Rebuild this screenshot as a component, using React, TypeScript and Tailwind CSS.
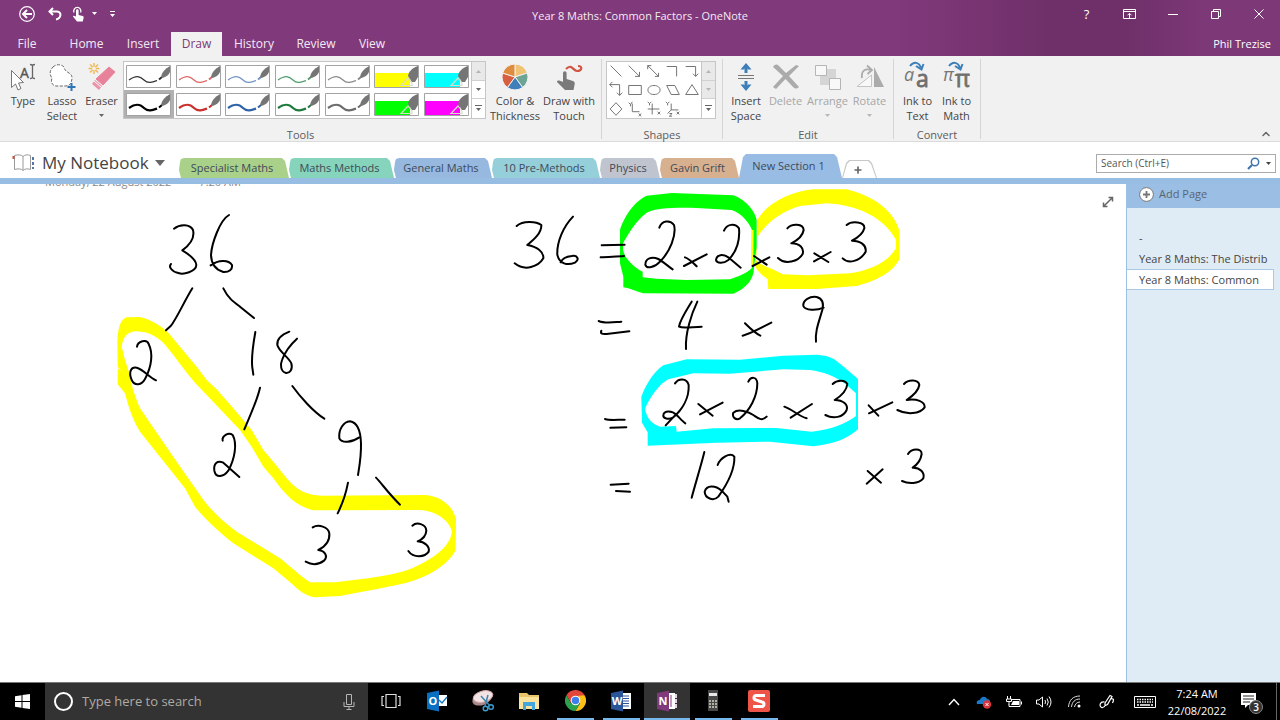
import type { ReactNode } from "react";
import { ChevronUp, Plus } from "lucide-react";

const ribbonTabs = [
  { name: "File", width: "w-[54px]" },
  { name: "Home", width: "w-[65px]" },
  { name: "Insert", width: "w-[52px] pr-1" },
  { name: "Draw", width: "w-[51px]" },
  { name: "History", width: "w-[64px]" },
  { name: "Review", width: "w-[60px]" },
  { name: "View", width: "w-[52px]" },
];

const pens = [
  { name: "Black", thin: "#333333", thick: "#000000" },
  { name: "Red", thin: "#e06666", thick: "#c9302c" },
  { name: "Blue", thin: "#6f95c6", thick: "#2e62a8" },
  { name: "Green", thin: "#4f9d6c", thick: "#1d7a3c" },
  { name: "Gray", thin: "#8a8a8a", thick: "#6b6b6b" },
];

const highlighters = [
  ["#ffff00", "#00ffff"],
  ["#00ff00", "#ff00ff"],
];

const sections = [
  { name: "Specialist Maths", style: "w-[110px] bg-[#a9d18a]" },
  { name: "Maths Methods", style: "w-[105px] bg-[#86d4bb]" },
  { name: "General Maths", style: "w-[98px] bg-[#97b9df]" },
  { name: "10 Pre-Methods", style: "w-[108px] bg-[#94cfda]" },
  { name: "Physics", style: "w-[60px] bg-[#c0c4ce]" },
  { name: "Gavin Grift", style: "w-[79px] bg-[#d7b090]" },
];

const tabShape =
  "[clip-path:polygon(2px_100%,0_60%,1px_4px,2px_1px,5px_0,calc(100%-7px)_0,calc(100%-4px)_3px,100%_100%)]";
const wideTabShape =
  "[clip-path:polygon(0_100%,4px_3px,7px_0,calc(100%-8px)_0,calc(100%-5px)_3px,100%_100%)]";

// Pen strokes of the factor tree
const treeInk = [
  "M222 86C240 72 270 72 279 90C286 118 262 140 247 151C270 165 288 180 289 195C288 215 250 225 235 219C215 215 205 200 213 192",
  "M387 45C360 60 335 130 333 165C334 195 350 210 370 216C388 217 398 208 396 195C385 178 355 180 332 196",
  "M277 265C255 300 225 365 212 378L198 391",
  "M370 265C385 295 400 305 420 320L462 354",
  "M111 440C113 425 140 415 146 432C160 460 155 500 135 537C125 555 105 560 95 540C85 515 93 500 110 503C130 508 145 530 168 541",
  "M466 396C460 430 454 480 457 503L460 524",
  "M568 395C550 402 530 415 532 435C537 455 565 470 574 490C579 508 570 520 558 519C542 515 540 495 546 480C555 455 570 435 591 416",
  "M480 563C472 600 455 635 433 688",
  "M577 558C600 590 640 635 673 656",
  "M368 722C365 708 385 695 398 705C412 730 405 775 385 812C370 832 348 835 343 812C340 790 352 780 370 788L418 831",
  "M778 712C755 728 725 730 718 715C715 690 730 665 750 664C775 668 782 700 783 730C784 770 778 800 774 825",
  "M744 848C738 880 728 910 713 940",
  "M828 833C845 850 865 880 900 914",
  "M638 982C655 972 685 980 688 1000C690 1025 675 1040 655 1050C675 1052 685 1070 672 1082C655 1095 635 1095 617 1085",
  "M937 977C950 965 978 972 979 992C978 1008 968 1018 953 1024C975 1025 990 1040 986 1055C975 1072 940 1075 925 1053",
];

// Pen strokes of the working on the right
const workingInk = [
  "M50 138C70 120 110 125 124 135C125 160 100 180 82 195C110 200 132 215 130 235C115 260 75 275 44 250",
  "M219 110C190 140 170 185 172 225C180 255 205 256 225 248C240 238 232 225 215 228C195 230 185 240 182 247",
  "M305 196L374 194M302 232C325 230 350 230 372 228",
  "M478 143C485 122 510 118 522 135C530 165 510 215 480 245C465 262 440 268 436 254C436 235 455 228 475 237C490 245 505 260 518 268",
  "M555 232C570 237 580 250 590 259M620 223L552 258",
  "M672 152C680 132 705 128 717 145C720 180 710 215 685 240C670 252 650 250 648 240C650 222 670 222 685 232L722 263",
  "M762 228L800 254M808 232L758 258",
  "M862 145C875 130 910 130 911 150C908 170 890 182 874 190C900 190 913 205 908 222C895 245 855 255 834 234",
  "M943 220L985 246M992 216L942 244",
  "M1040 135C1055 122 1095 125 1093 145C1088 165 1070 175 1056 182C1080 182 1100 195 1097 215C1080 245 1045 252 1028 235",
  "M296 423C315 432 340 427 364 425M304 452C300 462 308 463 320 462L388 454",
  "M575 365C560 390 540 420 537 440C550 447 580 440 605 440M592 365C575 400 555 460 558 507",
  "M735 430C750 445 765 460 781 467M814 428C790 440 750 462 728 467",
  "M971 383C950 392 915 392 910 378C908 360 930 348 950 351C968 356 972 370 967 390C955 430 945 455 948 485",
  "M315 717C330 722 350 719 374 719M331 743L379 742",
  "M525 610C535 595 560 592 566 615C568 655 545 690 520 712C505 720 488 715 490 705C492 692 515 690 530 705C540 715 548 725 556 730M525 706L497 736",
  "M595 672L638 707M668 668L600 703",
  "M745 605C752 590 770 588 772 610C772 650 750 690 720 715C708 722 695 712 700 698C715 685 745 695 760 705C775 715 785 725 800 710",
  "M853 680C880 690 895 708 920 715M936 672L872 713",
  "M998 612C1010 600 1035 598 1042 612C1040 635 1020 650 1004 660C1030 660 1045 675 1040 690C1030 712 1000 718 976 705",
  "M1106 676L1135 707M1177 667L1107 700",
  "M1212 612C1225 598 1255 598 1258 615C1255 635 1235 650 1220 660C1250 655 1275 665 1274 682C1260 702 1220 705 1192 690",
  "M332 914L386 911M348 933L390 935",
  "M613 816C605 850 585 915 575 953",
  "M653 855C660 835 690 815 703 830C705 870 680 915 655 950C640 965 615 955 614 935C620 915 645 915 665 932L682 950L686 965",
  "M1103 873L1143 908M1148 868L1100 911",
  "M1224 822C1235 805 1265 803 1265 822C1262 845 1250 855 1238 863C1260 862 1275 878 1270 895C1255 912 1225 912 1206 903",
];

function TitleBar() {
  return (
    <div className="grid h-8 grid-cols-[1fr_auto_1fr] items-center">
      <div className="flex items-center pb-1 pl-[18px]">
        <button aria-label="Back" className="w-[30px]">
          <svg width="18" height="18" viewBox="0 0 18 18" fill="none" stroke="white">
            <circle cx="9" cy="9" r="7.3" strokeWidth="1.2" />
            <path d="M14 9H5M9 5L5 9l4 4" strokeWidth="2" />
          </svg>
        </button>
        <button aria-label="Undo" className="w-[24px]">
          <svg width="14" height="14" viewBox="0 0 14 14" fill="none" stroke="white" strokeWidth="2">
            <path d="M5 1L1.5 4.500L5 8M2 4.500H9C14 5 13.500 11 8 12.500" />
          </svg>
        </button>
        <button aria-label="Touch mode" className="flex w-[28px] items-center gap-2">
          <svg width="12" height="16" viewBox="0 0 12 16" fill="white">
            <path d="M4 4.500a1.300 1.300 0 0 1 2.600 0V9l4 1c1 .3 1.200 1 1 2l-.8 3.500H5L1 10.500c0-1 1-1.300 3 0z" />
            <path d="M2 6.500A3.600 3.600 0 1 1 8.600 6.500" fill="none" stroke="white" strokeWidth="1.300" />
          </svg>
          <svg width="6" height="4" viewBox="0 0 6 4" className="shrink-0" fill="white"><path d="M0 0h5L2.500 3z" /></svg>
        </button>
        <button aria-label="Customize toolbar" className="ml-[10px]">
          <svg width="6" height="8" viewBox="0 0 6 8" fill="white"><path d="M0 1h5v1H0zM0 4h5L2.500 7z" /></svg>
        </button>
      </div>
      <h1 className="text-[11px] text-[#f4e9f3]">Year 8 Maths: Common Factors - OneNote</h1>
      <div className="flex justify-end pb-1 text-white">
        <button className="h-6 w-[43px] text-[13px] leading-6" aria-label="Help">?</button>
        <button className="flex h-6 w-[43px] items-center justify-center" aria-label="Ribbon display options">
          <svg width="13" height="11" viewBox="0 0 13 11" fill="none" stroke="white">
            <path d="M.5 .5h12v9H.5zM.5 2.500h12M6.500 9V4.500M4.500 6.300L6.500 4.300L8.500 6.300" />
          </svg>
        </button>
        <button className="flex h-6 w-[43px] items-center justify-center" aria-label="Minimize">
          <svg width="10" height="10" viewBox="0 0 10 10" stroke="white"><path d="M0 5.500H10" /></svg>
        </button>
        <button className="flex h-6 w-[43px] items-center justify-center" aria-label="Restore">
          <svg width="10" height="10" viewBox="0 0 10 10" fill="none" stroke="white">
            <path d="M.5 2.500h7v7h-7zM2.500 2.500v-2h7v7h-2" />
          </svg>
        </button>
        <button className="flex h-6 w-[43px] items-center justify-center" aria-label="Close">
          <svg width="10" height="10" viewBox="0 0 10 10" stroke="white"><path d="M.5 .5l9 9M9.500 .5l-9 9" /></svg>
        </button>
      </div>
    </div>
  );
}

function RibbonTabs() {
  return (
    <nav className="flex h-6 items-stretch">
      {ribbonTabs.map((tab) => (
        <button
          key={tab.name}
          className={`${tab.width} text-xs ${tab.name === "Draw" ? "bg-[#f1f1f1] text-[#7a3a76]" : "text-[#f4e9f3]"}`}
        >
          {tab.name}
        </button>
      ))}
      <button className="ml-auto pr-[9px] text-[11px] text-white">Phil Trezise</button>
    </nav>
  );
}

function Tool({ icon, label, width, disabled, arrow }: { icon: ReactNode; label: string[]; width: string; disabled?: boolean; arrow?: boolean }) {
  return (
    <button
      disabled={disabled}
      className={`${width} flex shrink-0 flex-col items-center text-[11px] leading-[15px] whitespace-nowrap ${disabled ? "text-[#a6a6a6]" : "text-[#444]"}`}
    >
      <span className="flex h-8 items-center justify-center">{icon}</span>
      {label.map((line) => (
        <span key={line}>{line}</span>
      ))}
      {arrow && (
        <svg width="5" height="3" viewBox="0 0 5 3" className="mt-[6px]" fill={disabled ? "#b8b8b8" : "#666"}>
          <path d="M0 0h5L2.500 3z" />
        </svg>
      )}
    </button>
  );
}

function Group({ name, width, children }: { name: string; width: string; children: ReactNode }) {
  return (
    <section className={`${width} flex shrink-0 flex-col`}>
      <div className="flex h-[68px] items-start border-r border-[#d5d5d5]">{children}</div>
      <h2 className="h-3 border-r border-[#d5d5d5] text-center text-[11px] leading-4 text-[#5c5c5c]">{name}</h2>
    </section>
  );
}

function PenSwatch({ name, color, thick }: { name: string; color: string; thick?: boolean }) {
  const selected = thick && name === "Black";
  return (
    <button aria-label={`${name} pen`} className={`flex items-center justify-center ${selected ? "bg-[#b1b1b1]" : ""}`}>
      <svg width="45" height="23" viewBox="0 0 45 23" fill="none">
        <path d="M.5 .5h44v22H.5z" fill="white" stroke="#a3a3a3" />
        <path d="M3 15C10 10 14 11 18 15C22 19 27 17 31 15.500" stroke={color} strokeWidth={thick ? 2.2 : 1.2} />
        <path d="M33 14.500L36 12" stroke={color} strokeWidth="2" />
        <path d="M35 12C36 7 39 4 44 1V7C43 10 40 12 36.500 13z" fill="#757575" />
      </svg>
    </button>
  );
}

function HighlighterSwatch({ color }: { color: string }) {
  return (
    <button aria-label="Highlighter" className="flex items-center justify-center">
      <svg width="45" height="23" viewBox="0 0 45 23" fill="none">
        <path d="M.5 .5h44v22H.5z" fill="white" stroke="#a3a3a3" />
        <path d="M1 8h35v14H1z" fill={color} />
        <path d="M27 20.500L34 13L38 18V20.500z" stroke="#d8dcc8" strokeWidth="1.200" />
        <path d="M34 11C35 6 38 3 44 1V12L41 17L38 17z" fill="#757575" />
      </svg>
    </button>
  );
}

function GalleryScroll({ dim }: { dim?: boolean }) {
  return (
    <div className="flex w-[14px] flex-col border-l border-[#c6c6c6]">
      <button aria-label="Scroll up" className="flex h-[19px] items-center justify-center border-b border-[#d0d0d0] bg-[#e9e9e9]">
        <svg width="5" height="3" fill="#b5b5b5"><path d="M0 3h5L2.500 0z" /></svg>
      </button>
      <button aria-label="Scroll down" className={`flex h-[18px] items-center justify-center border-b border-[#d0d0d0] ${dim ? "bg-[#e9e9e9]" : ""}`}>
        <svg width="5" height="3" fill={dim ? "#b5b5b5" : "#666"}><path d="M0 0h5L2.500 3z" /></svg>
      </button>
      <button aria-label="More" className="flex flex-1 items-center justify-center">
        <svg width="7" height="7" fill="#666"><path d="M0 0h7v1H0zM1 3h5L3.500 6z" /></svg>
      </button>
    </div>
  );
}

const TypeIcon = (
  <svg width="28" height="28" viewBox="0 0 28 28" fill="none">
    <path d="M2.500 7.500V24.500L6.500 21L9 27L12 25.500L9.500 20L14.500 19.500z" fill="white" stroke="#777" />
    <text x="11" y="15" fontSize="14" fill="#555" stroke="#555" strokeWidth=".4" fontFamily="Open Sans, sans-serif">A</text>
    <path d="M21 1.500C23 1.500 23.500 2 23.500 3V14C23.500 15 23 15.500 21 15.500M26 1.500C24 1.500 23.500 2 23.500 3V14C23.500 15 24 15.500 26 15.500" stroke="#666" strokeWidth="1.300" />
  </svg>
);

const LassoIcon = (
  <svg width="28" height="28" viewBox="0 0 28 28" fill="none">
    <path d="M5 4C8 1 13 1 16 4C17 10 23 9 24 14C24 20 22 23 17 23H8C3 22 3 18 4 15C1 11 2 7 5 4z" fill="white" stroke="#666" strokeDasharray="3 1.500" />
    <path d="M23.500 20v8M19.500 24h8" stroke="#2f74b5" strokeWidth="2" />
  </svg>
);

const EraserIcon = (
  <svg width="30" height="30" viewBox="0 0 30 30" fill="none">
    <path d="M22 5L28 10L16 23L9 17z" fill="#e8829a" stroke="#e8829a" strokeLinejoin="round" />
    <path d="M8 18L15 24L12 28L5 22z" fill="#eb93a7" />
    <path d="M7 19L14.500 25.500" stroke="white" />
    <path d="M7 1v11M1.500 6.500h11M3 2.500l8 8M11 2.500l-8 8" stroke="#efb95a" strokeWidth="1.500" />
    <circle cx="7" cy="6.500" r="2" fill="#f7efe0" />
  </svg>
);

const ColorIcon = (
  <svg width="28" height="28" viewBox="-14 -14 28 28" stroke="#f1f1f1" strokeWidth="1">
    <path d="M0 0V-13A13 13 0 0 1 12.400-4z" fill="#f0c274" />
    <path d="M0 0L12.400-4A13 13 0 0 1 7.600 10.500z" fill="#6da592" />
    <path d="M0 0L7.600 10.500A13 13 0 0 1-7.600 10.500z" fill="#3f7fba" />
    <path d="M0 0L-7.600 10.500A13 13 0 0 1-12.400-4z" fill="#d65f3f" />
    <path d="M0 0L-12.400-4A13 13 0 0 1 0-13z" fill="#e08c3e" />
  </svg>
);

const TouchIcon = (
  <svg width="28" height="28" viewBox="0 0 28 28" fill="none">
    <path d="M11 6C17 0 18 8 22 8C27 8 28 3 23 3" stroke="#cf5541" strokeWidth="2.200" />
    <path d="M8 10a1.800 1.800 0 0 1 3.600 0V16L18 18C20 19 20 20 19.500 22L18.500 27H10L2 19C2 17 4 17 8 19z" fill="#7a7a7a" />
  </svg>
);

const InsertSpaceIcon = (
  <svg width="18" height="30" viewBox="0 0 18 30" fill="none">
    <path d="M9 11V3M9 19v8" stroke="#3c7fb9" strokeWidth="3" />
    <path d="M9 1L14.500 7.500H11L9 5L7 7.500H3.500zM9 29L14.500 22.500H11L9 25L7 22.500H3.500z" fill="#3c7fb9" />
    <path d="M1 13.500h16M1 16.500h16" stroke="#777" />
  </svg>
);

const DeleteIcon = (
  <svg width="28" height="28" viewBox="0 0 28 28" fill="#ababab">
    <path d="M1 4C3 1 5 1 7 3L14 10L24 2L27 3L17 13L27 24C25 26 23 26 21 24L13.500 16L4 26L1 24L11 13z" />
  </svg>
);

const ArrangeIcon = (
  <svg width="28" height="28" viewBox="0 0 28 28" fill="none">
    <path d="M6 6h16v16H6z" fill="#d5d5d5" />
    <path d="M1.500 2.500h11v10h-11zM15.500 15.500h11v11h-11z" fill="#f8f8f8" stroke="#b5b5b5" />
  </svg>
);

const RotateIcon = (
  <svg width="28" height="28" viewBox="0 0 28 28" fill="none">
    <path d="M1 23.500L15.500 12V23.500z" fill="#f8f8f8" stroke="#c4c4c4" />
    <path d="M18 4V24H28z" fill="#ababab" />
    <path d="M6 15C5 8 9 5 15 7M11 2.500L16 7L11.500 11" stroke="#ababab" strokeWidth="1.800" />
  </svg>
);

function ConvertIcon({ glyph }: { glyph: string }) {
  return (
    <svg width="32" height="32" viewBox="0 0 32 32" fill="none" className="overflow-visible">
      <text x="2" y="20" fontSize="18" fontStyle="italic" fill="#777" fontFamily="Open Sans, sans-serif">{glyph}</text>
      <text x="14" y="26" fontSize="23" fill="#6f6f6f" stroke="#6f6f6f" strokeWidth=".8" fontFamily="Open Sans, sans-serif">{glyph}</text>
      <path d="M8 5C12 0 17 1 19 7M14 5L19.500 8.500L21.500 3" stroke="#3c7fb9" strokeWidth="2" />
    </svg>
  );
}

const shapePaths = [
  "M4 4L16 16",
  "M3 4L15 16M15 11V16H10",
  "M3 4L15 16M15 12V16H11M3 8V4H7",
  "M3 5H14V16",
  "M3 5H14V16M11 13L14 16L17 13",
  "M3 4H14V16M6 1L3 4L6 7M11 13L14 16L17 13",
  "M3 5H17V15H3z",
  "M10 5C19 5 19 15 10 15C1 15 1 5 10 5z",
  "M3 5H12L17 15H8z",
  "M10 4L17 15H3z",
  "M10 3L16.500 10L10 17L3.500 10z",
  "M7 4V13H15M3 3L5 5L7 2M5 5V7M14 15L17 18M17 15L14 18",
  "M3 10H16M8 4V16M3 2L5 4L7 2M5 4V6M14 13L17 16M17 13L14 16",
  "M8 4V11H16M8 11L4 15M2 2L4 4L6 2M4 4V6M14 13L17 16M17 13L14 16M6 15H9L6 18H9",
];

function Ribbon() {
  return (
    <div className="flex h-[86px] border-b border-[#d9dcdb] bg-[#f1f1f1] pt-[3px]">
      <Group name="Tools" width="w-[602px]">
        <div className="flex pt-[2px] pl-1">
          <Tool icon={TypeIcon} label={["Type"]} width="w-[38px]" />
          <Tool icon={LassoIcon} label={["Lasso", "Select"]} width="w-[40px]" />
          <Tool icon={EraserIcon} label={["Eraser"]} width="w-[39px]" arrow />
          <div className="ml-[2px] flex h-[58px] w-[363px] border border-[#c6c6c6] bg-white">
            <div className="grid flex-1 grid-cols-7 grid-rows-2">
              {pens.map((p) => <PenSwatch key={p.name} name={p.name} color={p.thin} />)}
              {highlighters[0].map((c) => <HighlighterSwatch key={c} color={c} />)}
              {pens.map((p) => <PenSwatch key={p.name} name={p.name} color={p.thick} thick />)}
              {highlighters[1].map((c) => <HighlighterSwatch key={c} color={c} />)}
            </div>
            <GalleryScroll />
          </div>
          <Tool icon={ColorIcon} label={["Color &", "Thickness"]} width="w-[58px]" />
          <Tool icon={TouchIcon} label={["Draw with", "Touch"]} width="w-[50px]" />
        </div>
      </Group>
      <Group name="Shapes" width="w-[121px]">
        <div className="mt-[2px] ml-1 flex h-[58px] w-[110px] border border-[#c6c6c6] bg-white">
          <div className="grid flex-1 grid-cols-5 grid-rows-3">
            {shapePaths.map((d) => (
              <button key={d} aria-label="Shape" className="flex items-center justify-center">
                <svg width="18" height="18" viewBox="0 0 20 20" fill="none" stroke="#666"><path d={d} /></svg>
              </button>
            ))}
          </div>
          <GalleryScroll dim />
        </div>
      </Group>
      <Group name="Edit" width="w-[171px]">
        <div className="flex pt-[2px] pl-1">
          <Tool icon={InsertSpaceIcon} label={["Insert", "Space"]} width="w-[38px]" />
          <Tool icon={DeleteIcon} label={["Delete"]} width="w-[41px]" disabled />
          <Tool icon={ArrangeIcon} label={["Arrange"]} width="w-[43px]" disabled arrow />
          <Tool icon={RotateIcon} label={["Rotate"]} width="w-[41px]" disabled arrow />
        </div>
      </Group>
      <Group name="Convert" width="w-[87px]">
        <div className="flex pt-[2px] pl-1">
          <Tool icon={<ConvertIcon glyph="a" />} label={["Ink to", "Text"]} width="w-[39px]" />
          <Tool icon={<ConvertIcon glyph="π" />} label={["Ink to", "Math"]} width="w-[39px]" />
        </div>
      </Group>
      <button aria-label="Collapse the ribbon" className="mt-auto mr-2 mb-px ml-auto text-[#666]">
        <ChevronUp size={12} strokeWidth={3} />
      </button>
    </div>
  );
}

function NotebookBar() {
  return (
    <div className="flex h-9 items-end bg-white pl-3">
      <button className="mb-px flex w-[167px] shrink-0 items-center text-[#444]">
        <svg width="22" height="18" viewBox="0 0 22 18" fill="none" stroke="#999">
          <path d="M2.500 1.500C6 .5 9 .5 11 2.500C13 .5 16 .5 18.500 1.500V15.500C16 14.500 13 14.500 11 16.500C9 14.500 6 14.500 2.500 15.500zM11 2.500V16" />
          <path d="M1.500 2v3" stroke="#d0503c" strokeWidth="2" />
          <path d="M21 3v12" stroke="#5577a8" strokeWidth="2" strokeDasharray="3 2" />
        </svg>
        <span className="ml-2 text-[17px] leading-7 whitespace-nowrap">My Notebook</span>
        <svg width="10" height="6" viewBox="0 0 10 6" className="ml-[6px] shrink-0" fill="#666"><path d="M0 0h10L5 6z" /></svg>
      </button>
      <div className="flex items-end text-[11px] text-[#404a58]">
        {sections.map((s) => (
          <button key={s.name} className={`${s.style} ${tabShape} h-5 pr-1 whitespace-nowrap`}>{s.name}</button>
        ))}
        <button className={`${wideTabShape} h-6 w-[103px] bg-[#98bce3] pr-1`}>New Section 1</button>
        <button aria-label="Create a new section" className={`${wideTabShape} flex h-[18px] w-[35px] bg-[#c8c8c8] px-px pt-px`}>
          <span className={`${wideTabShape} flex h-full w-full items-center justify-center bg-white pr-1`}>
            <Plus size={10} strokeWidth={4} color="#666" />
          </span>
        </button>
      </div>
      <label className="mr-1 mb-[5px] ml-auto flex h-[19px] w-[180px] items-center border border-[#ababab] bg-white px-1">
        <input
          aria-label="Search"
          placeholder="Search (Ctrl+E)"
          className="min-w-0 flex-1 text-[10px] outline-none placeholder:text-[#555]"
        />
        <svg width="13" height="13" viewBox="0 0 13 13" fill="none" stroke="#3f74ac">
          <circle cx="8" cy="5" r="3.700" strokeWidth="1.500" />
          <path d="M5 8L1 12" strokeWidth="2.200" />
        </svg>
        <svg width="5" height="3" className="ml-[6px]" fill="#444"><path d="M0 0h5L2.500 3z" /></svg>
      </label>
    </div>
  );
}

function PageCanvas() {
  return (
    <main className="relative min-w-0 flex-1 overflow-hidden bg-white">
      <p className="absolute -top-[10px] left-[45px] flex gap-7 text-[11px] leading-4 text-[#8a8a8a]">
        <span>Monday, 22 August 2022</span>
        <span>7:20 AM</span>
      </p>
      <svg className="absolute inset-0 h-full w-full" role="img" aria-label="Handwritten factor tree and working" fill="none">
        <g transform="translate(100 16) scale(.33333)">
          <path
            fill="#ff0"
            fillRule="evenodd"
            d="M53 500L52 420C55 380 62 358 80 352L120 351C150 358 180 375 205 398L290 500L320 540L350 568L400 625L455 690L490 750L520 785L560 835C590 870 620 888 670 887L970 885C1010 885 1040 905 1058 932L1068 955L1067 1050C1045 1095 985 1130 920 1148C850 1165 780 1175 720 1188L645 1192C620 1188 600 1175 580 1155L520 1105L400 1030C370 1005 325 970 285 920L255 865L120 695C100 665 85 620 75 580L53 553V505L62 512z
            M65 440C70 405 85 395 110 394C150 395 180 415 200 440C230 475 255 515 285 548L325 590L420 690L455 740L490 800L520 835C555 885 590 920 640 931L960 930C1010 932 1050 965 1056 995C1050 1045 990 1080 940 1103C900 1120 850 1128 780 1138L705 1147L630 1147C590 1120 555 1085 540 1075L410 995C370 965 330 930 300 885L230 785L175 705L120 625C105 590 95 560 88 520L75 480z"
          />
          <g stroke="black" strokeWidth="6" strokeLinecap="round" strokeLinejoin="round">
            {treeInk.map((d) => <path key={d} d={d} />)}
          </g>
        </g>
        <g transform="translate(500 -4) scale(.33333)">
          <g fillRule="evenodd">
            <path
              fill="#ff0"
              d="M772 120C800 70 870 35 940 28L1040 28C1110 45 1180 85 1199 155L1199 235C1185 270 1140 300 1070 318L950 327L805 327L803 298C785 285 768 270 765 255L772 180z
              M774 168C800 130 840 95 900 78L980 70C1070 75 1150 110 1188 180L1188 205C1160 250 1110 270 1050 280L925 286L848 283C820 265 790 262 768 240z"
            />
            <path
              fill="#0f0"
              d="M360 150C370 115 400 65 440 47L515 39L700 46C740 60 765 95 770 120L770 200L762 262C763 295 740 325 700 341L430 340C410 335 390 325 370 322L370 290L360 250z
              M369 190C385 160 410 120 440 98C465 85 520 82 590 84L695 90C725 100 750 130 758 155L755 265C740 280 715 290 690 298L560 300L470 296L428 292L428 275C400 262 375 235 369 210z"
            />
            <path fill="#ff0" d="M754 150h7l-1 105h-7z" />
            <path
              fill="#0ff"
              d="M424 650C435 620 460 575 490 556L560 538L720 539L850 527L950 524C975 526 990 530 1003 538L1035 563L1074 597L1074 748C1040 778 1000 792 940 799L810 785L650 788L443 797L443 757L426 728z
              M435 687C450 650 480 610 505 598L580 580L690 581L850 568L930 570C970 575 1010 590 1040 615L1068 640L1068 708C1040 730 990 750 935 755L830 744L640 745L530 755L528 738L480 740C455 732 440 715 435 687z"
            />
          </g>
          <g stroke="black" strokeWidth="6" strokeLinecap="round" strokeLinejoin="round">
            {workingInk.map((d) => <path key={d} d={d} />)}
          </g>
        </g>
      </svg>
      <button aria-label="Full page view" className="absolute top-3 right-3">
        <svg width="12" height="12" viewBox="0 0 12 12" fill="none" stroke="#666" strokeWidth="1.500">
          <path d="M2 10L10 2M6.500 1.500h4v4M1.500 6.500v4h4" />
        </svg>
      </button>
    </main>
  );
}

function PageList() {
  return (
    <aside className="w-[154px] border-l border-[#9cc0e6] bg-[#dfecf5] text-[11px] text-[#444]">
      <button className="flex h-6 w-full items-center bg-[#9abee4] pb-1 pl-3 text-[#5a6470]">
        <svg width="15" height="15" viewBox="0 0 15 15" fill="white" stroke="#777">
          <circle cx="7.500" cy="7.500" r="6.900" />
          <path d="M7.500 4v7M4 7.500h7" strokeWidth="1.800" />
        </svg>
        <span className="ml-[5px]">Add Page</span>
      </button>
      <ul className="mt-5 whitespace-nowrap">
        <li className="h-5 pl-3 leading-5"><a href="#untitled">-</a></li>
        <li className="h-[21px] pl-3 leading-[21px] font-medium"><a href="#distributive">Year 8 Maths: The Distrib</a></li>
        <li className="mr-[6px] h-[21px] border-y border-r border-[#a9c8e6] bg-white pl-3 leading-[19px]"><a href="#common">Year 8 Maths: Common</a></li>
      </ul>
    </aside>
  );
}

function OfficeIcon({ letter, color, page }: { letter: string; color: string; page: ReactNode }) {
  return (
    <svg width="22" height="22" viewBox="0 0 22 22">
      {page}
      <path d="M1 3L13 .5V21.500L1 19z" fill={color} />
      <text x="7" y="15" fontSize="11" fontWeight="700" textAnchor="middle" fill="white" fontFamily="Open Sans, sans-serif">{letter}</text>
    </svg>
  );
}

const apps: { name: string; running?: boolean; active?: boolean; icon: ReactNode }[] = [
  {
    name: "Task View",
    icon: (
      <svg width="20" height="14" viewBox="0 0 20 14" fill="none" stroke="#ddd">
        <path d="M5 .5h10v13H5zM3 2.500H1v9h2M17 2.500h2v9h-2" strokeWidth="1.200" />
      </svg>
    ),
  },
  {
    name: "Outlook",
    icon: (
      <OfficeIcon letter="O" color="#0a6fc2" page={
        <g><path d="M12 5h9v11h-9z" fill="white" /><path d="M13 10l3 3l5-6" fill="none" stroke="#1673c4" strokeWidth="1.300" /></g>
      } />
    ),
  },
  {
    name: "Snipping Tool",
    icon: (
      <svg width="24" height="22" viewBox="0 0 24 22" fill="none">
        <ellipse cx="11" cy="9" rx="10" ry="6" transform="rotate(-20 11 9)" fill="#a98a8c" />
        <ellipse cx="12" cy="6.500" rx="10" ry="5.500" transform="rotate(-15 12 6.500)" fill="#f2e4e4" stroke="#d6a9a9" />
        <path d="M10 6l9 10M17 5l-3 11" stroke="#3c86b0" strokeWidth="1.500" />
        <circle cx="20" cy="17" r="2.300" stroke="#3c9bc9" strokeWidth="1.500" />
        <circle cx="14.500" cy="18.500" r="2.300" stroke="#3c9bc9" strokeWidth="1.500" />
      </svg>
    ),
  },
  {
    name: "File Explorer",
    icon: (
      <svg width="22" height="18" viewBox="0 0 22 18">
        <path d="M1 1h8l2 2h10v14H1z" fill="#e9c46a" />
        <path d="M1 5h20v12H1z" fill="#fbe39b" />
        <path d="M5 10h12v8h-3v-4H8v4H5z" fill="#45a6dd" />
      </svg>
    ),
  },
  {
    name: "Chrome",
    running: true,
    icon: (
      <svg width="21" height="21" viewBox="-12 -12 24 24">
        <path d="M-10.400-6A12 12 0 0 1 10.400-6L0 0z" fill="#e2453a" />
        <path d="M-10.400-6A12 12 0 0 0 0 12L5 3L-5 3z" fill="#2ba24c" />
        <path d="M10.400-6A12 12 0 0 1 0 12L5.200 3L3-6z" fill="#fbc116" />
        <path d="M-10.400-6H10.400L0-5L-5 3z" fill="#e2453a" />
        <circle r="5.500" fill="white" />
        <circle r="4.300" fill="#3f7fe8" />
      </svg>
    ),
  },
  {
    name: "Word",
    running: true,
    icon: (
      <OfficeIcon letter="W" color="#2a5699" page={
        <g><path d="M12 3h9v16h-9z" fill="white" /><path d="M13 6h6M13 8.500h6M13 11h6M13 13.500h6M13 16h6" stroke="#2a5699" /></g>
      } />
    ),
  },
  {
    name: "OneNote",
    running: true,
    active: true,
    icon: (
      <OfficeIcon letter="N" color="#80397b" page={
        <g><path d="M12 3h7v16h-7z" fill="white" /><path d="M19 4h2v4h-2zM19 9h2v4h-2zM19 14h2v4h-2z" fill="#e5d0e3" /><path d="M15 5v12" stroke="#80397b" /></g>
      } />
    ),
  },
  {
    name: "Calculator",
    running: true,
    icon: (
      <svg width="12" height="21" viewBox="0 0 12 21">
        <path d="M1 0h10v21H1z" fill="#484848" />
        <path d="M2 3h8v3H2z" fill="#e8e8e8" />
        <path d="M2 10h2v2H2zM5 10h2v2H5zM8 10h2v2H8zM2 13h2v2H2zM5 13h2v2H5zM8 13h2v2H8zM2 16h2v2H2zM5 16h2v2H5zM8 16h2v2H8z" fill="#b0b0a0" />
      </svg>
    ),
  },
  {
    name: "Snagit",
    running: true,
    icon: (
      <svg width="22" height="22" viewBox="0 0 22 22" fill="none">
        <rect width="22" height="22" rx="2" fill="#ee5448" />
        <path d="M17 5.500H8.500Q6 5.500 6 8Q6 9.500 8 10L14 12Q16 12.500 16 14Q16 16.500 13.500 16.500H5" stroke="white" strokeWidth="3" />
      </svg>
    ),
  },
];

const tray = [
  { name: "Show hidden icons", width: "w-[30px]", icon: <svg width="12" height="8" fill="none" stroke="white" strokeWidth="1.400"><path d="M1 7L6 1.500L11 7" /></svg> },
  {
    name: "OneDrive",
    width: "w-[30px]",
    icon: (
      <svg width="16" height="14" viewBox="0 0 16 14">
        <path d="M1 9C0 6 2 5 4 5C5 1 10 1 11 4C14 4 15 7 13 9z" fill="#1c78c8" />
        <circle cx="11" cy="9.500" r="4.200" fill="#d9343c" />
        <path d="M9.500 8l3 3M12.500 8l-3 3" stroke="white" />
      </svg>
    ),
  },
  {
    name: "Battery",
    width: "w-[30px]",
    icon: (
      <svg width="16" height="12" viewBox="0 0 16 12" fill="none" stroke="white">
        <path d="M6 3.500h8v7H3v-2M15.500 5.500v3M1.500 0v3M4.500 0v3M.5 3h5v2.500h-5zM3 6v3" />
        <path d="M7 5h6v4H5z" fill="white" stroke="none" />
      </svg>
    ),
  },
  {
    name: "Volume",
    width: "w-[30px]",
    icon: (
      <svg width="16" height="14" viewBox="0 0 16 14" fill="none" stroke="white">
        <path d="M.5 5v4H3l3.500 3V2L3 5zM9 5Q10 7 9 9M11 3.500Q13.500 7 11 10.500M13 1.500Q17 7 13 12.500" />
      </svg>
    ),
  },
  {
    name: "Network",
    width: "w-[31px]",
    icon: (
      <svg width="13" height="13" viewBox="0 0 13 13" fill="none" stroke="#ddd">
        <path d="M.5 12C1 5 5 1 12 1M3.500 12C4 7 7 4 12 4M6.500 12C7 9 9 7 12 7" />
        <circle cx="11" cy="11" r="1.500" fill="white" stroke="none" />
      </svg>
    ),
  },
  {
    name: "Windows Ink Workspace",
    width: "w-[33px]",
    icon: (
      <svg width="16" height="15" viewBox="0 0 16 15" fill="none" stroke="white" strokeWidth="1.200">
        <path d="M6 9L11 1.500L13 2.500L8.500 10.500L6 11.500zM5.500 8C1 7 0 12 2.500 13.500C5 14 6 12 6.500 11M11.500 5C15 4 15 6 13.500 9" />
      </svg>
    ),
  },
  {
    name: "Touch keyboard",
    width: "w-[44px]",
    icon: (
      <svg width="22" height="12" viewBox="0 0 22 12" fill="none" stroke="white">
        <path d="M.5 .5h21v11H.5z" />
        <path d="M3 3.500h16M3 6h16" strokeDasharray="1.500 1" strokeWidth="1.300" />
        <path d="M3 9h2M6 9h10M17 9h2" strokeWidth="1.300" />
      </svg>
    ),
  },
];

function Taskbar() {
  return (
    <footer className="flex h-[38px] border-t border-[#777] bg-black text-white">
      <button aria-label="Start" className="flex w-[45px] items-center justify-center">
        <svg width="15" height="15" viewBox="0 0 15 15" fill="white">
          <path d="M0 2.200L6.500 1.200V7H0zM7.500 1L15 0V7H7.500zM0 8H6.500V13.800L0 12.800zM7.500 8H15V15L7.500 14z" />
        </svg>
      </button>
      <label className="flex w-[323px] items-center bg-[#333] pr-3 pl-2">
        <svg width="21" height="21" viewBox="0 0 21 21" fill="none" stroke="white" strokeWidth="2"><circle cx="10.500" cy="10.500" r="8.500" /></svg>
        <input aria-label="Type here to search" placeholder="Type here to search" className="ml-2 min-w-0 flex-1 text-[13px] outline-none placeholder:text-[#b0aaa4]" />
        <svg width="14" height="16" viewBox="0 0 14 16" fill="none" stroke="#b5b5b5">
          <path d="M4.500 .5h5v10h-5zM2 8v4.500h10V8M7 12.500v3M4.500 15.500h5" />
        </svg>
      </label>
      {apps.map((app) => (
        <button key={app.name} aria-label={app.name} className={`flex w-[46px] flex-col items-center ${app.active ? "bg-[#333]" : ""}`}>
          <span className="flex flex-1 items-center">{app.icon}</span>
          <span className={`h-[2px] ${app.active ? "w-full" : "w-[37px]"} ${app.running ? "bg-[#76b9ed]" : ""}`} />
        </button>
      ))}
      <div className="ml-auto flex">
        {tray.map((item) => (
          <button key={item.name} aria-label={item.name} className={`${item.width} flex items-center justify-center`}>{item.icon}</button>
        ))}
        <button className="w-[60px] text-[11px] leading-[17px] whitespace-nowrap">
          <span className="block">7:24 AM</span>
          <span className="block">22/08/2022</span>
        </button>
        <button aria-label="3 notifications" className="flex w-[49px] items-center justify-center">
          <svg width="24" height="24" viewBox="0 0 24 24">
            <path d="M1 3h15v12H8l-3 3v-3H1z" fill="white" />
            <path d="M3 6h11M3 9h11M3 12h7" stroke="#222" />
            <circle cx="16" cy="17" r="6.500" fill="#333" stroke="#888" />
            <text x="16" y="21" fontSize="10" fontWeight="600" textAnchor="middle" fill="white" fontFamily="Open Sans, sans-serif">3</text>
          </svg>
        </button>
        <button aria-label="Show desktop" className="w-1 border-l border-[#666]" />
      </div>
    </footer>
  );
}

export default function App() {
  return (
    <div className="flex h-screen flex-col bg-white font-['Open_Sans','Noto_Sans',sans-serif]">
      <header>
        <div className="bg-[#80397b] bg-[linear-gradient(90deg,#80397b_70%,#6f3069_82%,#6f3069_88%,#7c3877_94%)]">
          <TitleBar />
          <RibbonTabs />
        </div>
        <Ribbon />
        <NotebookBar />
      </header>
      <div className="flex min-h-0 flex-1 border-t-[6px] border-[#98bde3]">
        <PageCanvas />
        <PageList />
      </div>
      <Taskbar />
    </div>
  );
}
